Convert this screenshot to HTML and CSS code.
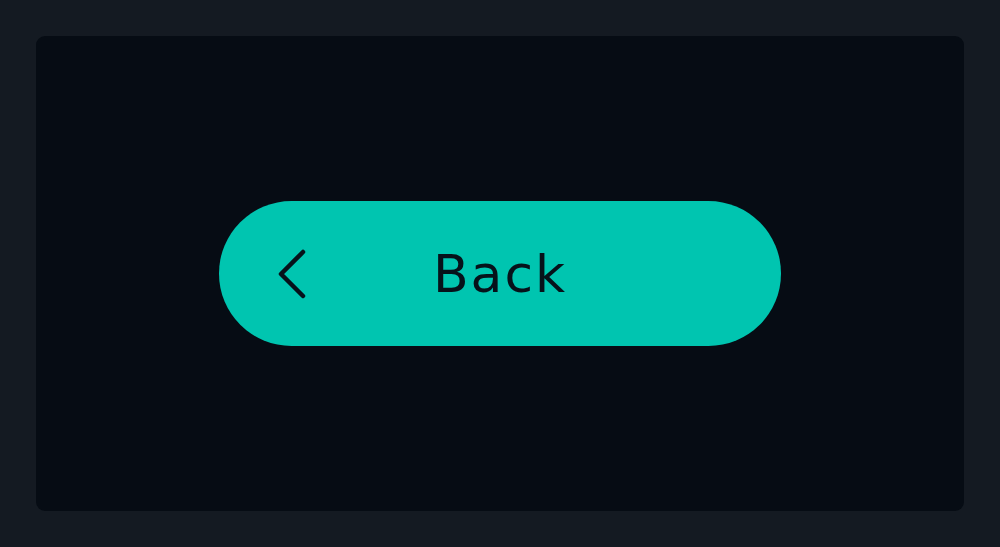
FILE: index.html
```html
<!DOCTYPE html>
<html lang="en">
<head>
    <meta charset="UTF-8">
    <title>Back Button</title>
    <link rel="stylesheet" href="styles.css">
</head>
<body>

    <div class="panel">
        <button class="back-btn" type="button">
            <svg class="chevron" width="30" height="52" viewBox="0 0 30 52">
                <path d="M26 4 L4 26 L26 48" fill="none" stroke="#06121a" stroke-width="4.5" stroke-linecap="round" stroke-linejoin="round"/>
            </svg>
            <span class="label">Back</span>
            <span class="spacer"></span>
        </button>
    </div>

</body>
</html>
```

FILE: styles.css
```css
html, body {
    margin: 0;
    height: 100%;
}
body {
    background: #141a22;
    padding: 36px;
    box-sizing: border-box;
    font-family: 'DejaVu Sans', sans-serif;
}
.panel {
    height: 475px;
    background: #060c14;
    border-radius: 9px;
    display: flex;
    align-items: center;
    justify-content: center;
}
.back-btn {
    width: 562px;
    height: 145px;
    border: none;
    border-radius: 73px;
    background: #00c5b0;
    padding: 0 58px;
    display: flex;
    align-items: center;
    cursor: pointer;
    font-family: inherit;
}
.chevron {
    flex: none;
}
.label {
    flex: 1;
    text-align: center;
    font-size: 52px;
    color: #06121a;
    letter-spacing: 2px;
    line-height: 1;
}
.spacer {
    width: 30px;
    flex: none;
}
```
